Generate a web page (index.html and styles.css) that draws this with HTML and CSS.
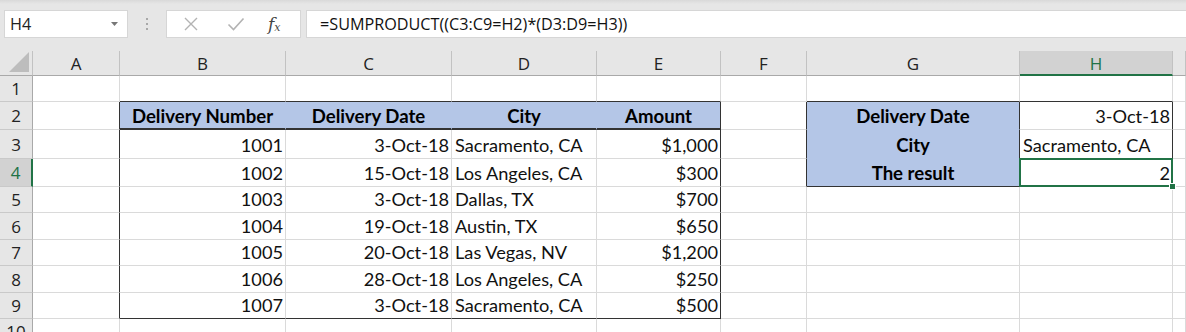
FILE: index.html
```html
<!DOCTYPE html>
<html>
<head>
<meta charset="utf-8">
<link rel="stylesheet" href="styles.css">
</head>
<body>
<div class="app">
  <div class="toolbar">
    <div class="namebox"><span>H4</span>
      <svg class="dd" width="8" height="5" viewBox="0 0 8 5"><path d="M0 0h7L3.5 4z" fill="#777"/></svg>
    </div>
    <div class="vdots"><i></i><i></i><i></i></div>
    <div class="fxbox">
      <svg class="ic" width="16" height="16" viewBox="0 0 16 16"><path d="M2 2L14 14M14 2L2 14" stroke="#b3b3b3" stroke-width="1.4" fill="none"/></svg>
      <svg class="ic" width="18" height="16" viewBox="0 0 18 16"><path d="M1.5 8.5L6.5 13.5L16.5 2.5" stroke="#b3b3b3" stroke-width="1.6" fill="none"/></svg>
      <span class="fx">f<sub>x</sub></span>
    </div>
    <div class="formula">=SUMPRODUCT((C3:C9=H2)*(D3:D9=H3))</div>
  </div>
  <div class="sheet">
    <!-- header row -->
    <div class="corner"><svg width="20" height="20" viewBox="0 0 20 20"><path d="M20 0V20H0z" fill="#bdbdbd"/></svg></div>
    <div class="ch">A</div><div class="ch">B</div><div class="ch">C</div><div class="ch">D</div><div class="ch">E</div><div class="ch">F</div><div class="ch">G</div><div class="ch sel">H</div><div class="ch"></div>
    <!-- row 1 -->
    <div class="rh">1</div>
    <div class="c"></div><div class="c db"></div><div class="c db"></div><div class="c db"></div><div class="c db"></div><div class="c"></div><div class="c db"></div><div class="c db"></div><div class="c"></div>
    <!-- row 2 -->
    <div class="rh">2</div>
    <div class="c dr"></div>
    <div class="c hd fr tb2">Delivery Number</div>
    <div class="c hd fr tb2">Delivery Date</div>
    <div class="c hd fr tb2">City</div>
    <div class="c hd dr tb2">Amount</div>
    <div class="c dr"></div>
    <div class="c hd dr fb">Delivery Date</div>
    <div class="c r dr">3-Oct-18</div>
    <div class="c"></div>
    <!-- row 3 -->
    <div class="rh">3</div>
    <div class="c dr"></div>
    <div class="c r">1001</div><div class="c r">3-Oct-18</div><div class="c">Sacramento, CA</div><div class="c r dr">$1,000</div>
    <div class="c dr"></div>
    <div class="c hd dr fb">City</div>
    <div class="c dr">Sacramento, CA</div>
    <div class="c"></div>
    <!-- row 4 -->
    <div class="rh sel">4</div>
    <div class="c dr"></div>
    <div class="c r">1002</div><div class="c r">15-Oct-18</div><div class="c">Los Angeles, CA</div><div class="c r dr">$300</div>
    <div class="c dr"></div>
    <div class="c hd dr db">The result</div>
    <div class="c r dr db active">2<div class="selbox"><div class="handle"></div></div></div>
    <div class="c"></div>
    <!-- row 5 -->
    <div class="rh">5</div>
    <div class="c dr"></div>
    <div class="c r">1003</div><div class="c r">3-Oct-18</div><div class="c">Dallas, TX</div><div class="c r dr">$700</div>
    <div class="c"></div><div class="c"></div><div class="c"></div><div class="c"></div>
    <!-- row 6 -->
    <div class="rh">6</div>
    <div class="c dr"></div>
    <div class="c r">1004</div><div class="c r">19-Oct-18</div><div class="c">Austin, TX</div><div class="c r dr">$650</div>
    <div class="c"></div><div class="c"></div><div class="c"></div><div class="c"></div>
    <!-- row 7 -->
    <div class="rh">7</div>
    <div class="c dr"></div>
    <div class="c r">1005</div><div class="c r">20-Oct-18</div><div class="c">Las Vegas, NV</div><div class="c r dr">$1,200</div>
    <div class="c"></div><div class="c"></div><div class="c"></div><div class="c"></div>
    <!-- row 8 -->
    <div class="rh">8</div>
    <div class="c dr"></div>
    <div class="c r">1006</div><div class="c r">28-Oct-18</div><div class="c">Los Angeles, CA</div><div class="c r dr">$250</div>
    <div class="c"></div><div class="c"></div><div class="c"></div><div class="c"></div>
    <!-- row 9 -->
    <div class="rh">9</div>
    <div class="c dr"></div>
    <div class="c r db">1007</div><div class="c r db">3-Oct-18</div><div class="c db">Sacramento, CA</div><div class="c r dr db">$500</div>
    <div class="c"></div><div class="c"></div><div class="c"></div><div class="c"></div>
    <!-- row 10 -->
    <div class="rh rtop">10</div>
    <div class="c"></div><div class="c"></div><div class="c"></div><div class="c"></div><div class="c"></div><div class="c"></div><div class="c"></div><div class="c"></div><div class="c"></div>
  </div>
</div>
</body>
</html>
```
FILE: styles.css
```css
* { box-sizing: border-box; }
html, body { margin: 0; padding: 0; background: #fff; }
body { overflow: hidden; width: 1186px; height: 332px; }
.app { display: flex; flex-direction: column; height: 332px; overflow: hidden; }

.toolbar {
  flex: 0 0 51px;
  height: 51px;
  background: linear-gradient(#d9d9d9 0, #e6e6e6 4px, #e6e6e6 100%);
  display: flex;
  align-items: flex-start;
  padding-top: 10px;
  font-family: "Open Sans", "Noto Sans", sans-serif;
  font-size: 16.2px;
  color: #222;
}
.namebox {
  margin-left: 4px;
  width: 124px;
  height: 28px;
  background: #fff;
  border: 1px solid #d6d6d6;
  display: flex;
  align-items: center;
  justify-content: space-between;
  padding: 0 6px 0 5px;
}
.namebox .dd { margin-right: 2px; }
.vdots {
  width: 38px;
  height: 28px;
  display: flex;
  flex-direction: column;
  align-items: center;
  justify-content: center;
  gap: 3px;
}
.vdots i { display: block; width: 2px; height: 2px; background: #a8a8a8; }
.fxbox {
  width: 135px;
  height: 28px;
  background: #fff;
  border: 1px solid #d6d6d6;
  display: flex;
  align-items: center;
  padding-left: 16px;
}
.fxbox .ic:nth-child(1) { margin-right: 28px; }
.fxbox .ic:nth-child(2) { margin-right: 23px; }
.fx {
  font-family: "DejaVu Serif", "Liberation Serif", serif;
  font-style: italic;
  font-size: 17px;
  color: #444;
  line-height: 1;
}
.fx sub { font-size: 11px; vertical-align: -1px; }
.formula {
  margin-left: 5px;
  flex: 1;
  height: 28px;
  background: #fff;
  border: 1px solid #d6d6d6;
  border-right: none;
  display: flex;
  align-items: center;
  padding-left: 13px;
  white-space: nowrap;
  color: #111;
}

.sheet {
  flex: 1 1 auto;
  min-height: 0;
  overflow: hidden;
  display: grid;
  grid-template-columns: 33px 87px 166px 166px 145px 124px 86px 213px 153px 1fr;
  grid-template-rows: 25px 26px 28px 29px 28px 26px 27px 26px 27px 26px 26px;
  font-family: "Lato", "Liberation Sans", sans-serif;
  font-size: 18.2px;
  color: #111;
}
.corner {
  background: #e6e6e6;
  border-right: 1px solid #c2c2c2;
  border-bottom: 1px solid #a9a9a9;
  display: flex;
  align-items: flex-end;
  justify-content: flex-end;
  padding: 0 3px 3px 0;
}
.ch {
  background: #e6e6e6;
  border-right: 1px solid #c2c2c2;
  border-bottom: 1px solid #a9a9a9;
  display: flex;
  align-items: center;
  justify-content: center;
  font-family: "Open Sans", "Noto Sans", sans-serif;
  font-size: 17px;
  color: #222;
  padding-top: 1px;
}
.ch.sel {
  background: #d2d2d2;
  color: #217346;
  border-bottom: 2px solid #217346;
}
.rh {
  background: #e6e6e6;
  border-right: 1px solid #a9a9a9;
  border-bottom: 1px solid #c9c9c9;
  display: flex;
  align-items: center;
  justify-content: center;
  font-family: "Open Sans", "Noto Sans", sans-serif;
  font-size: 17px;
  color: #222;
}
.rh.sel {
  background: #d2d2d2;
  color: #217346;
  border-right: 2px solid #217346;
}
.c {
  border-right: 1px solid #dadada;
  border-bottom: 1px solid #dadada;
  display: flex;
  align-items: flex-end;
  padding: 0 3px 3px 3px;
  line-height: 20px;
  white-space: nowrap;
  position: relative;
}
.c.active { z-index: 2; }
.c.r { justify-content: flex-end; padding-right: 2px; }
.c.hd {
  background: #b4c6e7;
  font-weight: 700;
  font-size: 18.6px;
  justify-content: center;
  color: #000;
}
.c.dr { border-right-color: #333; }
.c.db { border-bottom-color: #333; }
.c.fr { border-right-color: #b4c6e7; }
.c.fb { border-bottom-color: #b4c6e7; }
.c.tb2 { border-bottom: 2px solid #333; padding-bottom: 2px; }
.selbox {
  position: absolute;
  left: -1px;
  top: -1px;
  right: -1px;
  bottom: -1px;
  border: 2px solid #217346;
}
.handle {
  position: absolute;
  right: -5px;
  bottom: -5px;
  width: 7px;
  height: 7px;
  background: #217346;
  border: 1px solid #fff;
}
```
